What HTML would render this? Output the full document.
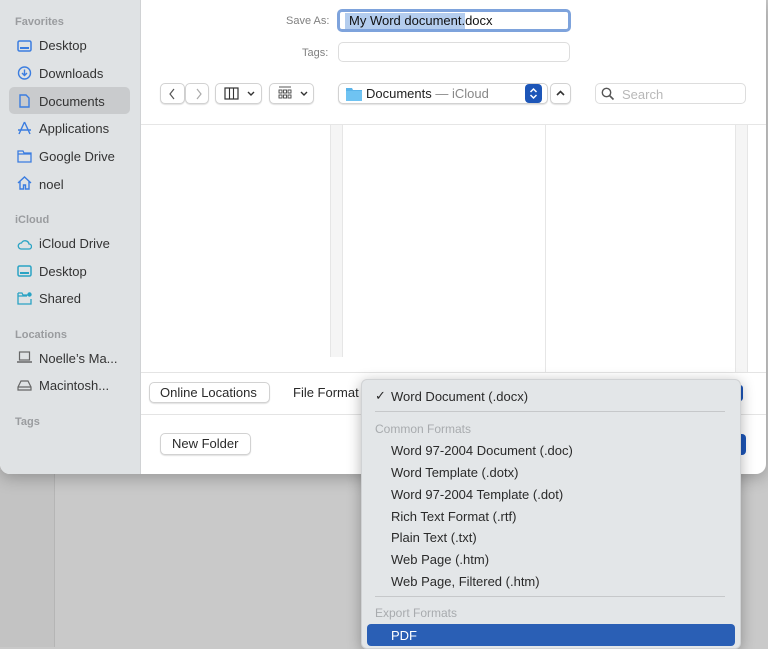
<!DOCTYPE html>
<html><head><style>
*{margin:0;padding:0;box-sizing:border-box}
body{width:768px;height:647px;overflow:hidden;background:#c9c9c9;font-family:"Liberation Sans",sans-serif;position:relative;font-size:13px;color:#2a2a2a}
.abs{position:absolute}
.bgl{left:0;top:470px;width:55px;height:177px;background:#c3c3c3;border-right:1px solid #b5b5b5}
.dlg{left:0;top:0;width:766px;height:474px;background:#fff;border-radius:0 0 10px 10px;overflow:hidden;box-shadow:0 4px 16px rgba(0,0,0,.25)}
.side{left:0;top:0;width:141px;height:474px;background:#dfe2e4;border-right:1px solid #d0d2d4}
.sh{font-size:11px;color:#9a9c9f;font-weight:bold;left:15px}
.it{left:39px;font-size:13px;color:#333}
.ic{left:17px;width:15px;height:14px}
.sel{left:9px;top:87px;width:121px;height:27px;background:#c9cbcd;border-radius:5px}
.btn{background:#fff;border:1px solid #d2d2d2;border-radius:5px;box-shadow:0 1px 1px rgba(0,0,0,.12)}
.menu{left:361px;top:379px;width:380px;height:270px;background:#e3e6e8;border-radius:6px;box-shadow:0 3px 14px rgba(0,0,0,.3);border:1px solid #d0d2d4}
.mi{left:29px;font-size:13px;color:#2a2a2a}
.mh{left:13px;font-size:12px;color:#a8abae}
</style></head><body>
<div class="abs bgl"></div>
<div class="abs dlg">
 <div class="abs side">
  <div class="abs sh" style="top:16px">Favorites</div>
  <div class="abs sel"></div>
  <svg class="abs ic" style="top:39px" viewBox="0 0 15 14"><rect x="1" y="2" width="13" height="10" rx="1.5" fill="none" stroke="#3b7de0" stroke-width="1.5"/><rect x="3" y="8" width="9" height="2" fill="#3b7de0"/></svg>
  <div class="abs it" style="top:38px">Desktop</div>
  <svg class="abs ic" style="top:66px" viewBox="0 0 15 14"><circle cx="7.5" cy="7" r="6" fill="none" stroke="#3b7de0" stroke-width="1.4"/><path d="M7.5 3.5v6M5 7l2.5 2.5L10 7" fill="none" stroke="#3b7de0" stroke-width="1.4"/></svg>
  <div class="abs it" style="top:66px">Downloads</div>
  <svg class="abs ic" style="top:94px" viewBox="0 0 15 14"><path d="M3 1h6l3 3v9H3z" fill="none" stroke="#3b7de0" stroke-width="1.4"/></svg>
  <div class="abs it" style="top:94px">Documents</div>
  <svg class="abs ic" style="top:121px" viewBox="0 0 15 14"><path d="M7.5 1L2 13M7.5 1L13 13M1 9h13" fill="none" stroke="#3b7de0" stroke-width="1.4"/></svg>
  <div class="abs it" style="top:121px">Applications</div>
  <svg class="abs ic" style="top:149px" viewBox="0 0 15 14"><path d="M1 2h5l1 2h7v9H1z M1 5h13" fill="none" stroke="#3b7de0" stroke-width="1.3"/></svg>
  <div class="abs it" style="top:149px">Google Drive</div>
  <svg class="abs ic" style="top:176px" viewBox="0 0 15 14"><path d="M1 7L7.5 1 14 7M3 5.5V13h3.5V9h2v4H12V5.5" fill="none" stroke="#3b7de0" stroke-width="1.4"/></svg>
  <div class="abs it" style="top:177px">noel</div>
  <div class="abs sh" style="top:214px">iCloud</div>
  <svg class="abs ic" style="top:237px" viewBox="0 0 15 14"><path d="M4 12h8a2.5 2.5 0 0 0 0-5 4 4 0 0 0-7.5-1A3 3 0 0 0 4 12z" fill="none" stroke="#2aa3c4" stroke-width="1.3"/></svg>
  <div class="abs it" style="top:236px">iCloud Drive</div>
  <svg class="abs ic" style="top:264px" viewBox="0 0 15 14"><rect x="1" y="2" width="13" height="10" rx="1.5" fill="none" stroke="#2aa3c4" stroke-width="1.5"/><rect x="3" y="8" width="9" height="2" fill="#2aa3c4"/></svg>
  <div class="abs it" style="top:264px">Desktop</div>
  <svg class="abs ic" style="top:291px" viewBox="0 0 15 14"><path d="M1 2h4l1 2h5M1 2v11h13V8M1 5h9" fill="none" stroke="#2aa3c4" stroke-width="1.3"/><circle cx="12.5" cy="3.5" r="2.2" fill="#2aa3c4"/></svg>
  <div class="abs it" style="top:291px">Shared</div>
  <div class="abs sh" style="top:329px">Locations</div>
  <svg class="abs ic" style="top:350px" viewBox="0 0 15 14"><rect x="2.5" y="2" width="10" height="8" fill="none" stroke="#666" stroke-width="1.2"/><path d="M0 12h15" stroke="#666" stroke-width="1.5"/></svg>
  <div class="abs it" style="top:351px">Noelle’s Ma...</div>
  <svg class="abs ic" style="top:378px" viewBox="0 0 15 14"><path d="M1 9l3-6h7l3 6v3H1z M1 9h13" fill="none" stroke="#666" stroke-width="1.2"/></svg>
  <div class="abs it" style="top:378px">Macintosh...</div>
  <div class="abs sh" style="top:416px">Tags</div>
 </div>
 <div class="abs" style="left:286px;top:15px;font-size:11px;color:#808080">Save As:</div>
 <div class="abs" style="left:337px;top:9px;width:234px;height:23px;border:3px solid #7ea3dc;border-radius:5px;background:#fff"></div>
 <div class="abs" style="left:345px;top:13px;width:120px;height:16px;background:#b4cdee"></div>
 <div class="abs" style="left:349px;top:13px;font-size:13px;color:#111">My Word document.docx</div>
 <div class="abs" style="left:302px;top:47px;font-size:11px;color:#808080">Tags:</div>
 <div class="abs btn" style="left:338px;top:42px;width:232px;height:20px;box-shadow:none;border-color:#ddd"></div>
 <div class="abs btn" style="left:160px;top:83px;width:25px;height:21px"></div>
 <div class="abs btn" style="left:185px;top:83px;width:24px;height:21px"></div>
 <svg class="abs" style="left:167px;top:87px" width="40" height="14"><path d="M7 2l-4 5 4 5" fill="none" stroke="#555" stroke-width="1.2"/><path d="M30 2l4 5-4 5" fill="none" stroke="#aaa" stroke-width="1.2"/></svg>
 <div class="abs btn" style="left:215px;top:83px;width:47px;height:21px"></div>
 <svg class="abs" style="left:224px;top:87px" width="36" height="14"><rect x="1" y="1" width="13" height="11" fill="none" stroke="#333" stroke-width="1.2"/><path d="M5.5 1v11M9.5 1v11" stroke="#333" stroke-width="1.1"/><path d="M24 5l3 3 3-3" fill="none" stroke="#333" stroke-width="1.4"/></svg>
 <div class="abs btn" style="left:269px;top:83px;width:45px;height:21px"></div>
 <svg class="abs" style="left:278px;top:86px" width="34" height="16"><g fill="none" stroke="#444" stroke-width=".9"><path d="M1 1h12"/><rect x="1" y="4" width="3" height="3"/><rect x="5.5" y="4" width="3" height="3"/><rect x="10" y="4" width="3" height="3"/><rect x="1" y="9" width="3" height="3"/><rect x="5.5" y="9" width="3" height="3"/><rect x="10" y="9" width="3" height="3"/></g><path d="M23 6l3 3 3-3" fill="none" stroke="#333" stroke-width="1.4"/></svg>
 <div class="abs btn" style="left:338px;top:83px;width:210px;height:21px"></div>
 <svg class="abs" style="left:346px;top:86px" width="16" height="15"><path d="M0 2h6l1 2h9v11H0z" fill="#5ab4ea"/><rect x="0" y="5" width="16" height="10" fill="#6fc3f2"/></svg>
 <div class="abs" style="left:366px;top:86px;font-size:13px;color:#222">Documents <span style="color:#888">— iCloud</span></div>
 <div class="abs" style="left:525px;top:84px;width:17px;height:19px;background:#1d56b8;border-radius:4px"></div>
 <svg class="abs" style="left:528px;top:86px" width="11" height="15"><path d="M2.5 6l3-3 3 3M2.5 9l3 3 3-3" fill="none" stroke="#fff" stroke-width="1.5"/></svg>
 <div class="abs btn" style="left:550px;top:83px;width:21px;height:21px"></div>
 <svg class="abs" style="left:555px;top:89px" width="11" height="8"><path d="M2 6l3.5-3.5L9 6" fill="none" stroke="#333" stroke-width="1.6"/></svg>
 <div class="abs btn" style="left:595px;top:83px;width:151px;height:21px;box-shadow:none;border-color:#ddd"></div>
 <svg class="abs" style="left:601px;top:87px" width="14" height="14"><circle cx="5.5" cy="5.5" r="4.2" fill="none" stroke="#555" stroke-width="1.4"/><path d="M8.5 8.5l4 4" stroke="#555" stroke-width="1.6"/></svg>
 <div class="abs" style="left:622px;top:87px;font-size:13px;color:#b8b8b8">Search</div>
 <div class="abs" style="left:141px;top:124px;width:625px;height:1px;background:#e6e6e6"></div>
 <div class="abs" style="left:330px;top:125px;width:13px;height:232px;background:#f5f5f5;border-left:1px solid #e6e6e6;border-right:1px solid #e6e6e6"></div>
 <div class="abs" style="left:545px;top:125px;width:1px;height:247px;background:#e6e6e6"></div>
 <div class="abs" style="left:735px;top:125px;width:13px;height:247px;background:#f5f5f5;border-left:1px solid #e6e6e6;border-right:1px solid #e6e6e6"></div>
 <div class="abs" style="left:141px;top:372px;width:625px;height:1px;background:#e4e4e4"></div>
 <div class="abs" style="left:141px;top:414px;width:625px;height:1px;background:#e4e4e4"></div>
 <div class="abs btn" style="left:149px;top:382px;width:121px;height:21px"></div>
 <div class="abs" style="left:160px;top:385px;font-size:13px">Online Locations</div>
 <div class="abs" style="left:293px;top:385px;font-size:13px">File Format</div>
 <div class="abs" style="left:733px;top:385px;width:10px;height:16px;background:#1d56b8;border-radius:3px"></div>
 <div class="abs btn" style="left:160px;top:433px;width:91px;height:22px"></div>
 <div class="abs" style="left:172px;top:436px;font-size:13px">New Folder</div>
 <div class="abs" style="left:733px;top:434px;width:13px;height:21px;background:#1d56b8;border-radius:4px"></div>
</div>
<div class="abs menu">
 <div class="abs" style="left:13px;top:8px;font-size:13px">✓</div>
 <div class="abs mi" style="top:9px">Word Document (.docx)</div>
 <div class="abs" style="left:13px;top:31px;width:350px;height:1px;background:#c6c8ca"></div>
 <div class="abs mh" style="top:42px">Common Formats</div>
 <div class="abs mi" style="top:63px">Word 97-2004 Document (.doc)</div>
 <div class="abs mi" style="top:85px">Word Template (.dotx)</div>
 <div class="abs mi" style="top:107px">Word 97-2004 Template (.dot)</div>
 <div class="abs mi" style="top:129px">Rich Text Format (.rtf)</div>
 <div class="abs mi" style="top:150px">Plain Text (.txt)</div>
 <div class="abs mi" style="top:172px">Web Page (.htm)</div>
 <div class="abs mi" style="top:194px">Web Page, Filtered (.htm)</div>
 <div class="abs" style="left:13px;top:216px;width:350px;height:1px;background:#c6c8ca"></div>
 <div class="abs mh" style="top:226px">Export Formats</div>
 <div class="abs" style="left:5px;top:244px;width:368px;height:22px;background:#2a5fb5;border-radius:4px"></div>
 <div class="abs mi" style="top:248px;color:#fff">PDF</div>
</div>
</body></html>
